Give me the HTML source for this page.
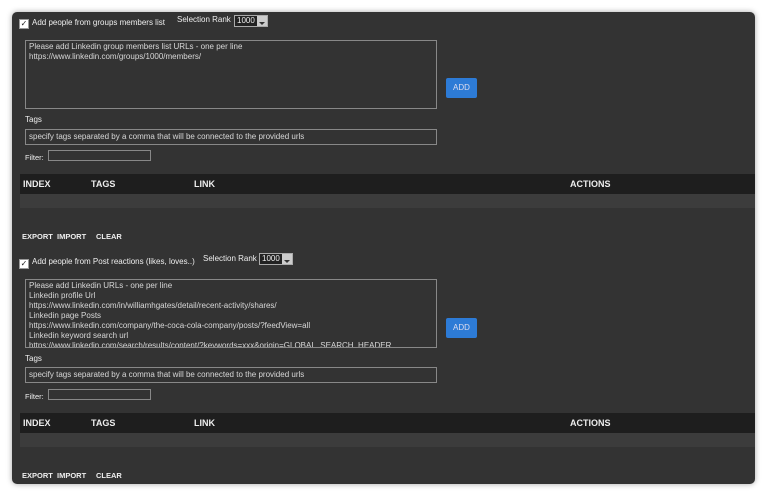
<!DOCTYPE html>
<html><head><style>
body{margin:0;width:768px;height:496px;background:#fff;position:relative;overflow:hidden;font-family:"Segoe UI","Liberation Sans",sans-serif;font-size:8px;color:#eee}
.panel{position:absolute;left:12px;top:12px;width:743px;height:472px;background:#333;border-radius:5px;box-shadow:0 0 6px rgba(0,0,0,.35)}
.a{position:absolute;white-space:nowrap}
.cb{position:absolute;width:8px;height:8px;background:#fff;border:1px solid #999;font-size:8px;line-height:8px;color:#222;text-align:center}
.box{position:absolute;border:1px solid #888;box-sizing:border-box;background:#333}
.spin{position:absolute;width:34px;height:12px;border:1px solid #aaa;box-sizing:border-box;background:#222;font-size:8px;line-height:10px;padding-left:2px}
.spin i{position:absolute;right:0;top:0;width:10px;height:10px;background:#ccc}
.spin i:after{content:"";position:absolute;left:2px;top:6px;border:3px solid transparent;border-top-color:#333;border-bottom:0}
.btn{position:absolute;width:31px;height:20px;background:#2d7bd6;border-radius:2px;color:#dde;text-align:center;line-height:20px;font-size:8px}
.hdr{position:absolute;left:8px;width:735px;height:20px;background:#1e1e1e;font-weight:bold;font-size:9px;line-height:20px}
.row{position:absolute;left:8px;width:735px;height:14px;background:#3c3c3c}
.ta{font-size:8px;line-height:10px;padding:1px 3px;color:#d8d8d8;overflow:hidden}
.ft{font-weight:bold;font-size:7.5px}
</style></head><body>
<div class="panel">
<div class="cb" style="left:7px;top:7px">✓</div>
<div class="a" style="left:20px;top:6px">Add people from groups members list</div>
<div class="a" style="left:165px;top:3px">Selection Rank</div>
<div class="spin" style="left:222px;top:3px">1000<i></i></div>
<div class="box ta" style="left:13px;top:28px;width:412px;height:69px">Please add Linkedin group members list URLs - one per line<br>https://www.linkedin.com/groups/1000/members/</div>
<div class="btn" style="left:434px;top:66px">ADD</div>
<div class="a" style="left:13px;top:103px">Tags</div>
<div class="box ta" style="left:13px;top:117px;width:412px;height:16px;line-height:12px">specify tags separated by a comma that will be connected to the provided urls</div>
<div class="a" style="left:13px;top:141px;font-size:7.5px">Filter:</div>
<div class="box" style="left:36px;top:138px;width:103px;height:11px"></div>
<div class="hdr" style="top:162px"><span class="a" style="left:3px">INDEX</span><span class="a" style="left:71px">TAGS</span><span class="a" style="left:174px">LINK</span><span class="a" style="left:550px">ACTIONS</span></div>
<div class="row" style="top:182px"></div>
<div class="a ft" style="left:10px;top:220px">EXPORT</div><div class="a ft" style="left:45px;top:220px">IMPORT</div><div class="a ft" style="left:84px;top:220px">CLEAR</div>

<div class="cb" style="left:7px;top:247px">✓</div>
<div class="a" style="left:20px;top:245px">Add people from Post reactions (likes, loves..)</div>
<div class="a" style="left:191px;top:242px">Selection Rank</div>
<div class="spin" style="left:247px;top:241px">1000<i></i></div>
<div class="box ta" style="left:13px;top:267px;width:412px;height:69px">Please add Linkedin URLs - one per line<br>Linkedin profile Url<br>https://www.linkedin.com/in/williamhgates/detail/recent-activity/shares/<br>Linkedin page Posts<br>https://www.linkedin.com/company/the-coca-cola-company/posts/?feedView=all<br>Linkedin keyword search url<br>https://www.linkedin.com/search/results/content/?keywords=xxx&amp;origin=GLOBAL_SEARCH_HEADER</div>
<div class="btn" style="left:434px;top:306px">ADD</div>
<div class="a" style="left:13px;top:342px">Tags</div>
<div class="box ta" style="left:13px;top:355px;width:412px;height:16px;line-height:12px">specify tags separated by a comma that will be connected to the provided urls</div>
<div class="a" style="left:13px;top:380px;font-size:7.5px">Filter:</div>
<div class="box" style="left:36px;top:377px;width:103px;height:11px"></div>
<div class="hdr" style="top:401px"><span class="a" style="left:3px">INDEX</span><span class="a" style="left:71px">TAGS</span><span class="a" style="left:174px">LINK</span><span class="a" style="left:550px">ACTIONS</span></div>
<div class="row" style="top:421px"></div>
<div class="a ft" style="left:10px;top:459px">EXPORT</div><div class="a ft" style="left:45px;top:459px">IMPORT</div><div class="a ft" style="left:84px;top:459px">CLEAR</div>
</div>
</body></html>
